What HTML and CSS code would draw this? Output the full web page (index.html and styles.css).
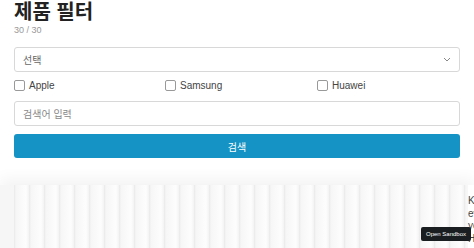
FILE: index.html
```
<!DOCTYPE html>
<html>
    <head>
        <title>제품 필터</title>
        <link rel="stylesheet" href="styles.css">
    </head>
    <body>
        <div class="app">
            <h1 class="title">제품 필터</h1>
            <div class="count">30 / 30</div>

            <!--SELECT-->
            <div class="select">
                <span>선택</span>
                <svg width="8" height="5" viewBox="0 0 8 5"><path d="M1 1l3 3 3-3" fill="none" stroke="#888" stroke-width="1"/></svg>
            </div>

            <!--BRANDS-->
            <div class="brands">
                <label class="brand"><span class="box"></span>Apple</label>
                <label class="brand"><span class="box"></span>Samsung</label>
                <label class="brand"><span class="box"></span>Huawei</label>
            </div>

            <!--SEARCH-->
            <div class="field">검색어 입력</div>
            <button class="submit">검색</button>
        </div>

        <div class="preview">
            <div class="stripes"></div>
            <div class="side">
                <div>Keyboard</div>
                <div>events</div>
                <div>you</div>
                <div>Hover</div>
            </div>
            <div class="tip">Open Sandbox</div>
        </div>
    </body>
</html>
```

FILE: styles.css
```
html, body{
    margin: 0;
    height: 100%;
    overflow: hidden;
    background-color: white;
}

body{
    font-family: "Liberation Sans", "Noto Sans CJK KR", sans-serif;
    color: #333;
}

.app{
    padding: 0 14px;
}

.title{
    margin: 0;
    height: 24px;
    font-size: 20px;
    line-height: 24px;
    font-weight: bold;
    color: #222;
}

.count{
    height: 12px;
    font-size: 9px;
    line-height: 12px;
    color: #999;
}

.select{
    margin-top: 11px;
    height: 23px;
    border: 1px solid #d8d8d8;
    border-radius: 3px;
    padding: 0 8px;
    display: flex;
    align-items: center;
    justify-content: space-between;
    font-size: 10px;
    color: #666;
}

.brands{
    display: grid;
    grid-template-columns: 151px 152px 1fr;
    margin-top: 6px;
    height: 14px;
    align-items: center;
}

.brand{
    display: flex;
    align-items: center;
    gap: 4px;
    font-size: 10px;
    color: #444;
}

.box{
    width: 9px;
    height: 9px;
    border: 1px solid #999;
    border-radius: 2px;
}

.field{
    margin-top: 9px;
    height: 23px;
    border: 1px solid #d8d8d8;
    border-radius: 3px;
    padding: 0 8px;
    display: flex;
    align-items: center;
    font-size: 10px;
    color: #888;
}

.submit{
    display: block;
    width: 100%;
    margin-top: 8px;
    height: 24px;
    border: none;
    border-radius: 3px;
    background-color: #1493c4;
    color: white;
    font-family: inherit;
    font-size: 10px;
}

.preview{
    position: relative;
    margin-top: 27px;
    height: 70px;
    display: flex;
    box-shadow: 0 -6px 14px rgba(0, 0, 0, 0.05);
    background-color: #f6f6f6;
}

.stripes{
    flex-shrink: 0;
    margin-left: 14px;
    width: 454px;
    background: repeating-linear-gradient(90deg, #e9e9e9 0, #f6f6f6 2px, #fdfdfd 12px, #f3f3f3 15px);
}

.side{
    background-color: white;
    padding: 10px 0 0 0;
    font-size: 10px;
    line-height: 12.5px;
    color: #444;
    white-space: nowrap;
}

.tip{
    position: absolute;
    left: 421px;
    top: 42px;
    padding: 3px 5px;
    background-color: #1b1e20;
    color: white;
    font-size: 6px;
    line-height: 8px;
    border-radius: 2px;
}
```
